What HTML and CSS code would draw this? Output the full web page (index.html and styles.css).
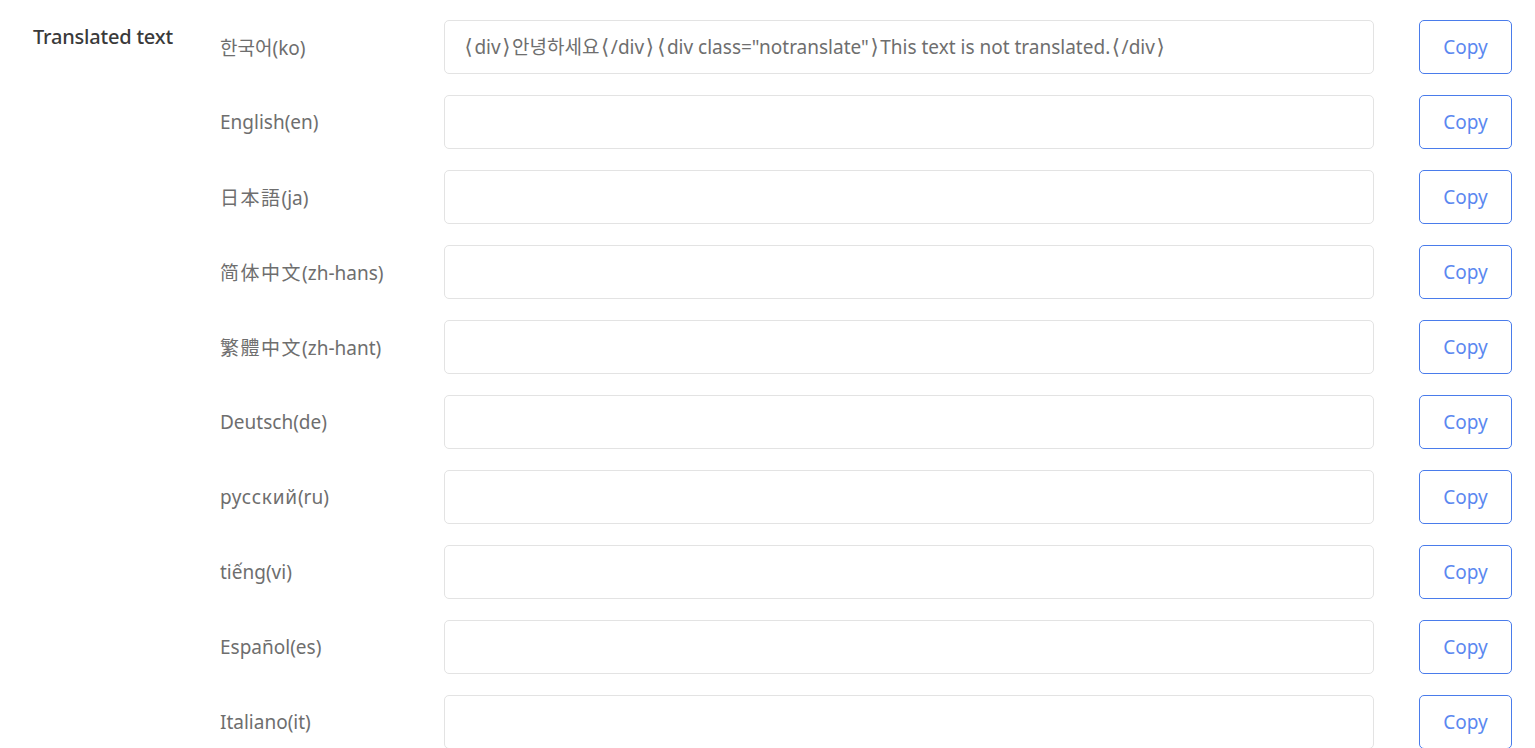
FILE: index.html
```html
<!DOCTYPE html>
<html lang="ko">
<head>
<meta charset="utf-8">
<link rel="stylesheet" href="styles.css">
</head>
<body>
<div class="section">
  <h2 class="section-title">Translated text</h2>
  <div class="rows">
    <div class="row"><span class="lang">한국어(ko)</span><div class="field"><span class="br">⟨</span>div<span class="br">⟩</span>안녕하세요<span class="br">⟨</span>/div<span class="br">⟩</span><span class="br">⟨</span>div class="notranslate"<span class="br">⟩</span>This text is not translated.<span class="br">⟨</span>/div<span class="br">⟩</span></div><button class="copy">Copy</button></div>
    <div class="row"><span class="lang">English(en)</span><div class="field"></div><button class="copy">Copy</button></div>
    <div class="row"><span class="lang" lang="ja"><span class="cjk">日本語</span>(ja)</span><div class="field"></div><button class="copy">Copy</button></div>
    <div class="row"><span class="lang" lang="zh-Hans"><span class="cjk">简体中文</span>(zh-hans)</span><div class="field"></div><button class="copy">Copy</button></div>
    <div class="row"><span class="lang" lang="zh-Hant"><span class="cjk">繁體中文</span>(zh-hant)</span><div class="field"></div><button class="copy">Copy</button></div>
    <div class="row"><span class="lang">Deutsch(de)</span><div class="field"></div><button class="copy">Copy</button></div>
    <div class="row"><span class="lang"><span class="cyr">русский</span>(ru)</span><div class="field"></div><button class="copy">Copy</button></div>
    <div class="row"><span class="lang">tiếng(vi)</span><div class="field"></div><button class="copy">Copy</button></div>
    <div class="row"><span class="lang">Español(es)</span><div class="field"></div><button class="copy">Copy</button></div>
    <div class="row"><span class="lang">Italiano(it)</span><div class="field"></div><button class="copy">Copy</button></div>
  </div>
</div>
</body>
</html>
```
FILE: styles.css
```css
html, body {
  margin: 0;
  padding: 0;
  background: #fff;
  overflow: hidden;
}
body {
  font-family: "Noto Sans", "Noto Sans CJK KR", sans-serif;
  color: #666;
}
.section {
  display: flex;
  padding: 20px 0 0 33px;
}
.section-title {
  width: 187px;
  margin: 0;
  padding-top: 3px;
  font-size: 20px;
  font-weight: 500;
  color: #3a3a3a;
  line-height: 28px;
  letter-spacing: -0.2px;
}
.rows {
  display: flex;
  flex-direction: column;
  gap: 21px;
}
.row {
  display: flex;
  align-items: center;
  height: 54px;
}
.lang {
  width: 224px;
  font-size: 19px;
  color: #6e6e6e;
}
.cjk {
  letter-spacing: 1.5px;
}
.cyr {
  letter-spacing: 0.8px;
}
.field {
  box-sizing: border-box;
  width: 930px;
  height: 54px;
  border: 1px solid #e3e3e3;
  border-radius: 5px;
  padding: 0 18px;
  font-size: 19px;
  line-height: 52px;
  color: #6e6e6e;
  white-space: nowrap;
  overflow: hidden;
}
.br {
  font-family: "DejaVu Sans", sans-serif;
  font-size: 21px;
  line-height: 1;
  margin: 0 1.6px;
}
.copy {
  box-sizing: border-box;
  margin-left: 45px;
  width: 93px;
  height: 54px;
  border: 1px solid #4a7ceb;
  border-radius: 5px;
  background: #fff;
  color: #5b88f0;
  font-family: "Noto Sans", sans-serif;
  font-size: 19px;
  padding: 0;
}
```
